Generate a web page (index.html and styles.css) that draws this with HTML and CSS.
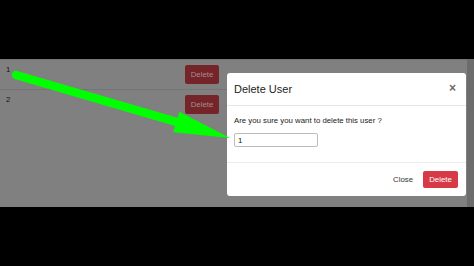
FILE: index.html
```html
<!DOCTYPE html>
<html lang="en">
<head>
<meta charset="utf-8">
<title>Delete User</title>
<link rel="stylesheet" href="styles.css">
</head>
<body>
<div class="screen">
  <div class="page">
    <div class="row"><span class="num">1</span><button class="btn btn-dim">Delete</button></div>
    <div class="row"><span class="num">2</span><button class="btn btn-dim">Delete</button></div>
  </div>
  <div class="gutter"></div>
  <div class="modal">
    <div class="modal-header">
      <h5 class="modal-title">Delete User</h5>
      <span class="close">&times;</span>
    </div>
    <div class="modal-body">
      <p class="question">Are you sure you want to delete this user ?</p>
      <input class="field" type="text" value="1">
    </div>
    <div class="modal-footer">
      <button class="btn-link">Close</button>
      <button class="btn btn-danger">Delete</button>
    </div>
  </div>
</div>
<svg class="arrow" width="474" height="266" viewBox="0 0 474 266">
  <line x1="16" y1="75" x2="178" y2="122.4" stroke="#00ff00" stroke-width="8.4" stroke-linecap="round"/>
  <polygon points="179.3,111.7 230,138 173.3,132.3" fill="#00ff00"/>
</svg>
</body>
</html>
```

FILE: styles.css
```css
html, body {
  margin: 0;
  padding: 0;
  width: 474px;
  height: 266px;
  overflow: hidden;
  background: #000;
}
body {
  position: relative;
  font-family: "Liberation Sans", Arial, sans-serif;
}
.screen {
  position: relative;
  margin-top: 59px;
  height: 148px;
  display: flex;
  background: #808080;
}
.page {
  flex: 1;
}
.gutter {
  width: 7px;
  background: #6c6c6c;
}
.row {
  display: flex;
  align-items: flex-start;
  height: 24px;
  padding: 5px 0 0 6px;
  border-top: 1px solid #747474;
}
.num {
  width: 179px;
  font-size: 7.8px;
  line-height: 10px;
  color: #141414;
}
.btn {
  font-family: "Liberation Sans", Arial, sans-serif;
  font-size: 7.8px;
  border: 0;
  border-radius: 2px;
  padding: 0;
  text-align: center;
}
.btn-dim {
  width: 34px;
  height: 19px;
  line-height: 19px;
  background: #752529;
  color: #a88b8d;
}
.modal {
  position: absolute;
  left: 227px;
  top: 14px;
  width: 239px;
  background: #fff;
  border-radius: 3px;
  overflow: hidden;
}
.modal-header {
  display: flex;
  justify-content: space-between;
  align-items: center;
  height: 32px;
  padding: 0 10px 0 7px;
  border-bottom: 1px solid #e7e7e7;
}
.modal-title {
  margin: 0;
  font-size: 11px;
  line-height: 13px;
  font-weight: normal;
  color: #1d1d1d;
}
.close {
  font-size: 12px;
  font-weight: bold;
  line-height: 12px;
  color: #6a6a6a;
  margin-top: -2px;
}
.modal-body {
  box-sizing: border-box;
  height: 57px;
  padding: 10px 7px 0;
  border-bottom: 1px solid #ececec;
}
.question {
  margin: 0 0 7px;
  font-size: 7.8px;
  line-height: 10px;
  color: #222;
}
.field {
  display: block;
  box-sizing: border-box;
  width: 84px;
  height: 14px;
  margin: 0;
  padding: 0 3px;
  border: 1px solid #bcbcbc;
  border-radius: 2px;
  font-family: "Liberation Sans", Arial, sans-serif;
  font-size: 7.8px;
  color: #111;
  outline: none;
}
.modal-footer {
  display: flex;
  justify-content: flex-end;
  align-items: center;
  height: 33px;
  padding: 0 8px;
}
.btn-link {
  background: none;
  border: 0;
  padding: 0;
  margin-right: 10px;
  font-family: "Liberation Sans", Arial, sans-serif;
  font-size: 7.8px;
  color: #333;
}
.btn-danger {
  width: 35px;
  height: 17px;
  line-height: 17px;
  background: #d73a47;
  color: #fff;
}
.arrow {
  position: absolute;
  left: 0;
  top: 0;
}
```
